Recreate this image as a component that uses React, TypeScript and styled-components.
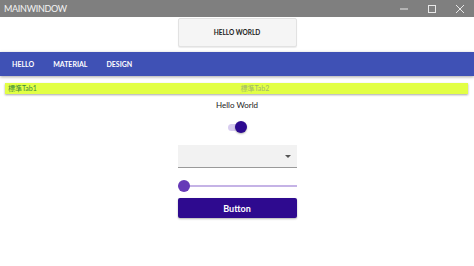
import React from 'react';
import styled, { createGlobalStyle } from 'styled-components';

const GlobalStyle = createGlobalStyle`
  html, body {
    margin: 0;
    padding: 0;
    background: #ffffff;
    font-family: 'Lato', 'Noto Sans CJK JP', sans-serif;
  }
`;

const Window = styled.div`
  width: 474px;
  height: 266px;
  display: flex;
  flex-direction: column;
  overflow: hidden;
  background: #ffffff;
`;

const TitleBar = styled.div`
  height: 17px;
  background: #7f7f7f;
  display: flex;
  align-items: center;
  justify-content: space-between;
  padding-left: 4px;
`;

const Title = styled.div`
  color: #f4f4f4;
  font-size: 9px;
  letter-spacing: -0.3px;
`;

const Controls = styled.div`
  display: flex;
  height: 100%;
`;

const ControlButton = styled.div`
  width: 28px;
  height: 100%;
  display: flex;
  align-items: center;
  justify-content: center;
`;

const TopRow = styled.div`
  display: flex;
  justify-content: center;
  padding-top: 1px;
  height: 34px;
`;

const HelloButton = styled.div`
  width: 119px;
  height: 29px;
  box-sizing: border-box;
  background: #f5f5f5;
  border: 1px solid #e2e2e2;
  border-radius: 2px;
  box-shadow: 0 1px 1px rgba(0, 0, 0, 0.08);
  display: flex;
  align-items: center;
  justify-content: center;
  font-size: 6.5px;
  font-weight: 700;
  color: #222;
`;

const MenuBar = styled.div`
  height: 24px;
  background: #3f51b5;
  box-shadow: 0 1px 3px rgba(0, 0, 0, 0.35);
  display: flex;
  align-items: center;
  padding-left: 12px;
`;

const MenuItem = styled.div`
  color: #ffffff;
  font-size: 7px;
  font-weight: 700;
  margin-right: 19px;
`;

const TabStrip = styled.div`
  margin: 7px 6px 0 5px;
  height: 11px;
  background: #e2ff45;
  box-shadow: 0 1px 2px rgba(0, 0, 0, 0.35);
  display: grid;
  grid-template-columns: 1fr 1fr;
  align-items: center;
`;

const TabLabel = styled.div<{ $active?: boolean }>`
  font-size: 7px;
  color: ${(p) => (p.$active ? '#3c8a3c' : '#9fb86a')};
  padding-left: ${(p) => (p.$active ? '3px' : '4px')};
  line-height: 11px;
`;

const Content = styled.div`
  display: flex;
  flex-direction: column;
  align-items: center;
`;

const HelloText = styled.div`
  margin-top: 6px;
  font-size: 8px;
  color: #222;
`;

const Toggle = styled.div`
  margin-top: 11px;
  width: 19px;
  height: 12px;
  display: flex;
  align-items: center;
  position: relative;
`;

const ToggleTrack = styled.div`
  width: 14px;
  height: 7px;
  border-radius: 4px;
  background: #d8cdf0;
`;

const ToggleThumb = styled.div`
  position: absolute;
  right: 0;
  top: 0;
  width: 12px;
  height: 12px;
  border-radius: 50%;
  background: #2d0a90;
  box-shadow: 0 1px 2px rgba(0, 0, 0, 0.3);
`;

const Combo = styled.div`
  margin-top: 12px;
  width: 119px;
  height: 23px;
  box-sizing: border-box;
  background: #f2f2f2;
  border-bottom: 1px solid #9a9a9a;
  display: flex;
  align-items: center;
  justify-content: flex-end;
  padding-right: 6px;
`;

const Arrow = styled.div`
  width: 0;
  height: 0;
  border-left: 3px solid transparent;
  border-right: 3px solid transparent;
  border-top: 3px solid #555;
`;

const Slider = styled.div`
  margin-top: 12px;
  width: 119px;
  height: 12px;
  display: flex;
  align-items: center;
  position: relative;
`;

const SliderTrack = styled.div`
  flex: 1;
  height: 2px;
  background: #c5b3e6;
`;

const SliderThumb = styled.div`
  position: absolute;
  left: 0;
  top: 0;
  width: 12px;
  height: 12px;
  border-radius: 50%;
  background: #673ab7;
`;

const PrimaryButton = styled.div`
  margin-top: 6px;
  width: 119px;
  height: 20px;
  border-radius: 2px;
  background: #2e0a8f;
  box-shadow: 0 1px 2px rgba(0, 0, 0, 0.3);
  display: flex;
  align-items: center;
  justify-content: center;
  color: #ffffff;
  font-size: 9px;
  font-weight: 700;
`;

export default function App() {
  return (
    <>
      <GlobalStyle />
      <Window>
        <TitleBar>
          <Title>MAINWINDOW</Title>
          <Controls>
            <ControlButton>
              <svg width="10" height="10" viewBox="0 0 10 10">
                <line x1="1" y1="5" x2="9" y2="5" stroke="#e8e8e8" strokeWidth="1" />
              </svg>
            </ControlButton>
            <ControlButton>
              <svg width="10" height="10" viewBox="0 0 10 10">
                <rect x="1.5" y="1.5" width="7" height="7" fill="none" stroke="#e8e8e8" strokeWidth="1" />
              </svg>
            </ControlButton>
            <ControlButton>
              <svg width="10" height="10" viewBox="0 0 10 10">
                <path d="M1 1 L9 9 M9 1 L1 9" stroke="#e8e8e8" strokeWidth="1" />
              </svg>
            </ControlButton>
          </Controls>
        </TitleBar>
        <TopRow>
          <HelloButton>HELLO WORLD</HelloButton>
        </TopRow>
        <MenuBar>
          <MenuItem>HELLO</MenuItem>
          <MenuItem>MATERIAL</MenuItem>
          <MenuItem>DESIGN</MenuItem>
        </MenuBar>
        <TabStrip>
          <TabLabel $active>標準Tab1</TabLabel>
          <TabLabel>標準Tab2</TabLabel>
        </TabStrip>
        <Content>
          <HelloText>Hello World</HelloText>
          <Toggle>
            <ToggleTrack />
            <ToggleThumb />
          </Toggle>
          <Combo>
            <Arrow />
          </Combo>
          <Slider>
            <SliderTrack />
            <SliderThumb />
          </Slider>
          <PrimaryButton>Button</PrimaryButton>
        </Content>
      </Window>
    </>
  );
}
